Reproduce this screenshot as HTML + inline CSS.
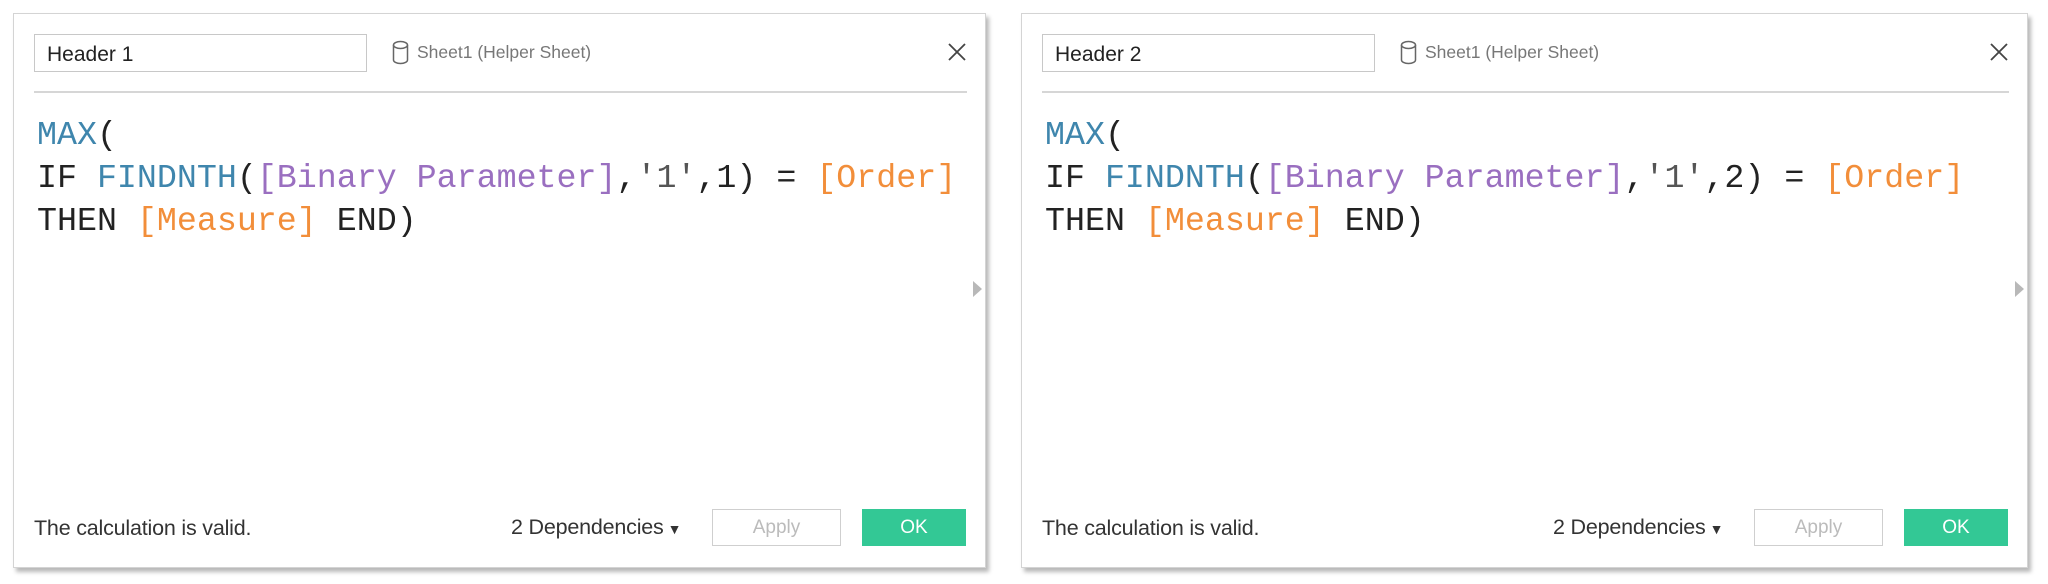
<!DOCTYPE html>
<html><head><meta charset="utf-8"><style>
*{margin:0;padding:0;box-sizing:border-box}
body{width:2048px;height:584px;background:#fff;position:relative;overflow:hidden;font-family:"Liberation Sans",sans-serif}
.p{position:absolute;top:13px;height:555px;background:#fff;border:1px solid #d4d4d4;box-shadow:3px 4px 4px rgba(0,0,0,0.28)}
.a{position:absolute}
.inp{top:20px;width:333px;height:38px;border:1px solid #c8c8c8;font-size:21px;color:#222;padding:8px 0 0 12px}
.src{top:26px;font-size:17.5px;color:#777;display:flex;align-items:center;gap:8px}
.x{top:29px}
.div{top:77px;height:2px;background:#d6d6d6}
.code{top:100px;font-family:"Liberation Mono",monospace;font-size:33.3px;line-height:43px;color:#222;white-space:pre}
.b{color:#3f86ad}.pu{color:#9a6fc0}.o{color:#f28e3a}.g{color:#555}
.arr{top:267px;width:0;height:0;border-top:8px solid transparent;border-bottom:8px solid transparent;border-left:9px solid #b8b8b8}
.val{top:502px;font-size:21.5px;color:#333;letter-spacing:-0.2px}
.dep{top:501px;font-size:21.5px;color:#333;letter-spacing:-0.2px}
.ap{top:495px;width:129px;height:37px;border:1px solid #cfcfcf;color:#bbb;font-size:19px;text-align:center;line-height:35px}
.ok{top:495px;width:104px;height:37px;background:#33c895;color:#fff;font-size:19px;text-align:center;line-height:37px}
</style></head><body>

<div class="p" style="left:13px;width:973px">
 <div class="a inp" style="left:20px">Header 1</div>
 <div class="a src" style="left:378px"><svg width="17" height="25" viewBox="0 0 17 25"><ellipse cx="8.5" cy="5" rx="7" ry="3.5" fill="none" stroke="#666" stroke-width="1.5"/><path d="M1.5 5V20A7 3.5 0 0 0 15.5 20V5" fill="none" stroke="#666" stroke-width="1.5"/></svg>Sheet1 (Helper Sheet)</div>
 <svg class="a x" style="left:934px" width="18" height="18" viewBox="0 0 18 18"><path d="M1 1L17 17M17 1L1 17" stroke="#444" stroke-width="1.8"/></svg>
 <div class="a div" style="left:20px;width:933px"></div>
 <div class="a code" style="left:23px"><span class="b">MAX</span>(
IF <span class="b">FINDNTH</span>(<span class="pu">[Binary Parameter]</span>,<span class="g">'1'</span>,1) = <span class="o">[Order]</span>
THEN <span class="o">[Measure]</span> END)</div>
 <div class="a arr" style="left:959px"></div>
 <div class="a val" style="left:20px">The calculation is valid.</div>
 <div class="a dep" style="left:497px">2 Dependencies<span style="font-size:14px;margin-left:4px">▼</span></div>
 <div class="a ap" style="left:698px">Apply</div>
 <div class="a ok" style="left:848px">OK</div>
</div>

<div class="p" style="left:1021px;width:1007px">
 <div class="a inp" style="left:20px">Header 2</div>
 <div class="a src" style="left:378px"><svg width="17" height="25" viewBox="0 0 17 25"><ellipse cx="8.5" cy="5" rx="7" ry="3.5" fill="none" stroke="#666" stroke-width="1.5"/><path d="M1.5 5V20A7 3.5 0 0 0 15.5 20V5" fill="none" stroke="#666" stroke-width="1.5"/></svg>Sheet1 (Helper Sheet)</div>
 <svg class="a x" style="left:968px" width="18" height="18" viewBox="0 0 18 18"><path d="M1 1L17 17M17 1L1 17" stroke="#444" stroke-width="1.8"/></svg>
 <div class="a div" style="left:20px;width:967px"></div>
 <div class="a code" style="left:23px"><span class="b">MAX</span>(
IF <span class="b">FINDNTH</span>(<span class="pu">[Binary Parameter]</span>,<span class="g">'1'</span>,2) = <span class="o">[Order]</span>
THEN <span class="o">[Measure]</span> END)</div>
 <div class="a arr" style="left:993px"></div>
 <div class="a val" style="left:20px">The calculation is valid.</div>
 <div class="a dep" style="left:531px">2 Dependencies<span style="font-size:14px;margin-left:4px">▼</span></div>
 <div class="a ap" style="left:732px">Apply</div>
 <div class="a ok" style="left:882px">OK</div>
</div>
</body></html>
